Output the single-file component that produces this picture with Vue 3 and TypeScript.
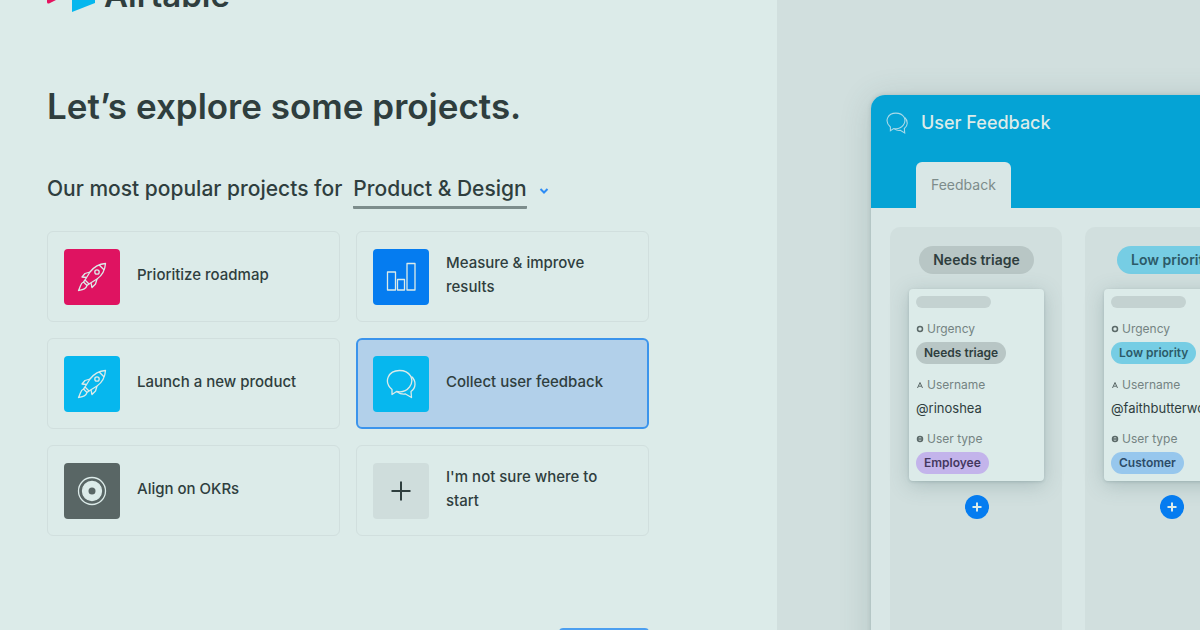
<script setup lang="ts">
import { ref } from 'vue'

type IconName = 'rocket' | 'chart' | 'chat' | 'target' | 'plus'

interface Project {
  label: string
  icon: IconName
  tone: string
}

interface Lane {
  status: string
  tone: string
  username: string
  userType: string
  typeTone: string
}

const category = ref('Product & Design')
const selected = ref('Collect user feedback')

const projects: Project[] = [
  { label: 'Prioritize roadmap', icon: 'rocket', tone: 'pink' },
  { label: 'Measure & improve results', icon: 'chart', tone: 'blue' },
  { label: 'Launch a new product', icon: 'rocket', tone: 'cyan' },
  { label: 'Collect user feedback', icon: 'chat', tone: 'cyan' },
  { label: 'Align on OKRs', icon: 'target', tone: 'slate' },
  { label: "I'm not sure where to start", icon: 'plus', tone: 'pale' },
]

const lanes: Lane[] = [
  { status: 'Needs triage', tone: 'gray', username: '@rinoshea', userType: 'Employee', typeTone: 'purple' },
  { status: 'Low priority', tone: 'sky', username: '@faithbutterworth', userType: 'Customer', typeTone: 'azure' },
]
</script>

<template>
  <div class="page">
    <main class="picker">
      <header class="brand">
        <svg class="brand-mark" width="49" height="30" viewBox="0 0 49 30" aria-hidden="true">
          <path d="M0 6 L17 14 L2 21.500 Q0 22 0 20Z" fill="#e5135f" />
          <path d="M25 13 L48 4 V21 L25 30Z" fill="#06b7ee" />
        </svg>
        <span class="brand-name">Airtable</span>
      </header>

      <h1>Let’s explore some projects.</h1>

      <div class="category">
        <label for="category">Our most popular projects for</label>
        <select id="category" v-model="category">
          <option>Product &amp; Design</option>
        </select>
        <svg class="chevron" width="10" height="8" viewBox="0 0 10 8" aria-hidden="true">
          <path d="M1.500 2 L5 5.500 L8.500 2" />
        </svg>
      </div>

      <div class="projects">
        <button
          v-for="project in projects"
          :key="project.label"
          type="button"
          class="project"
          :class="{ active: project.label === selected }"
          :aria-pressed="project.label === selected"
          @click="selected = project.label"
        >
          <span class="tile" :class="project.tone">
            <svg v-if="project.icon === 'rocket'" width="30" height="30" viewBox="-1 -1 30 30" aria-hidden="true">
              <path d="M27.500 .5 C20 1 15.500 4.500 12 9 L7 17 L11 21 L19 16 C24 12.500 27 8 27.500 .5Z" />
              <path d="M12 9 L7 10.500 L4 14 L8.500 14.500 M19 16 L17.500 21 L14 24.500 L13 19.800" />
              <path d="M21 1.800 L26.200 7" />
              <circle cx="19" cy="9" r="2.200" />
              <path d="M7 17 L5.500 19 M11 21 L9 22.500 M5.500 19 C2.500 20 3 22.500 .5 27.500 C5 26.500 8 26 9 22.500Z" />
            </svg>
            <svg v-else-if="project.icon === 'chart'" width="30" height="30" viewBox="-1 -1 30 30" aria-hidden="true">
              <rect x="0.500" y="9" width="8" height="18" />
              <rect x="10.500" y="16.500" width="7" height="10.500" />
              <rect x="20" y="0.500" width="8" height="26.500" />
            </svg>
            <svg v-else-if="project.icon === 'chat'" width="30" height="30" viewBox="-1 -1 30 30" aria-hidden="true">
              <path d="M5 24.500 V19.500 C-4 11.500 1.500 .5 12.500 .5 C23 .5 28 9.500 22.500 17 C19 21.500 14 22.500 9.500 21.500Z" />
              <path d="M24.500 6.500 C29.500 11 29 18 24 21.500 L24.500 27.500 L18.500 24 C15.500 24.500 13 24 10.500 22" />
            </svg>
            <svg v-else-if="project.icon === 'target'" width="30" height="30" viewBox="-1 -1 30 30" aria-hidden="true">
              <circle cx="14" cy="14" r="13.500" />
              <circle class="disc" cx="14" cy="14" r="9.500" />
              <circle class="dot" cx="14" cy="14" r="3.500" />
            </svg>
            <svg v-else width="30" height="30" viewBox="-1 -1 30 30" aria-hidden="true">
              <path class="cross" d="M14 4.500 V23.500 M4.500 14 H23.500" />
            </svg>
          </span>
          <span class="project-label">{{ project.label }}</span>
        </button>
      </div>

      <button type="button" class="next" aria-label="Next"></button>
    </main>

    <aside class="preview">
      <section class="base">
        <div class="base-head">
          <div class="base-title">
            <svg width="22" height="22" viewBox="-1 -1 30 30" aria-hidden="true">
              <path d="M5 24.500 V19.500 C-4 11.500 1.500 .5 12.500 .5 C23 .5 28 9.500 22.500 17 C19 21.500 14 22.500 9.500 21.500Z" />
              <path d="M24.500 6.500 C29.500 11 29 18 24 21.500 L24.500 27.500 L18.500 24 C15.500 24.500 13 24 10.500 22" />
            </svg>
            <h2>User Feedback</h2>
          </div>
          <div class="tab">Feedback</div>
        </div>

        <div class="lanes">
          <div v-for="lane in lanes" :key="lane.status" class="lane">
            <span class="status" :class="lane.tone">{{ lane.status }}</span>
            <article class="record">
              <div class="bar"></div>
              <div class="field">
                <svg width="8" height="8" viewBox="0 0 8 8" aria-hidden="true"><circle cx="4" cy="4" r="2.500" /></svg>
                Urgency
              </div>
              <span class="chip" :class="lane.tone">{{ lane.status }}</span>
              <div class="field">
                <svg width="8" height="8" viewBox="0 0 8 8" aria-hidden="true"><path class="thin" d="M1.500 7 L4 1.500 L6.500 7 M2.500 5.200 H5.500" /></svg>
                Username
              </div>
              <div class="value">{{ lane.username }}</div>
              <div class="field">
                <svg width="8" height="8" viewBox="0 0 8 8" aria-hidden="true"><circle cx="4" cy="4" r="2.500" /><path d="M2 4 H6" /></svg>
                User type
              </div>
              <span class="chip" :class="lane.typeTone">{{ lane.userType }}</span>
            </article>
            <button type="button" class="add" aria-label="Add record">
              <svg width="12" height="12" viewBox="0 0 12 12" aria-hidden="true"><path d="M6 1.500 V10.500 M1.500 6 H10.500" /></svg>
            </button>
          </div>
        </div>
      </section>
    </aside>
  </div>
</template>

<style>
body {
  margin: 0;
}
</style>

<style scoped>
* {
  box-sizing: border-box;
}

.page {
  display: grid;
  grid-template-columns: minmax(0, 1fr) 423px;
  height: 100vh;
  overflow: hidden;
  background: #dcebe9;
  color: #2f3e3e;
  font-family: Inter, "Liberation Sans", sans-serif;
}

button,
select {
  font: inherit;
  color: inherit;
}

.picker {
  display: flex;
  flex-direction: column;
  padding: 0 128px 0 47px;
  min-width: 0;
}

.brand {
  display: flex;
  align-items: flex-end;
  gap: 8px;
  height: 12px;
  flex-shrink: 0;
  overflow: hidden;
}

.brand-mark {
  flex-shrink: 0;
}

.brand-name {
  font-size: 33px;
  line-height: 34px;
  font-weight: 600;
}

h1 {
  margin: 72px 0 0;
  font-size: 35px;
  line-height: 44px;
  font-weight: 600;
}

.category {
  display: flex;
  align-items: flex-start;
  margin-top: 44px;
  height: 37px;
  font-size: 21px;
  line-height: 34px;
  font-weight: 500;
  white-space: nowrap;
}

.category select {
  appearance: none;
  field-sizing: content;
  margin-left: 11px;
  padding: 0;
  height: 37px;
  border: 0;
  border-bottom: 3px solid #7d8d8c;
  border-radius: 1px;
  background: transparent;
}

.chevron {
  align-self: center;
  margin-left: 12px;
  fill: none;
  stroke: #2d8cf5;
  stroke-width: 2;
}

.projects {
  display: grid;
  grid-template-columns: repeat(2, minmax(0, 1fr));
  gap: 16px;
  margin-top: 22px;
}

.project {
  display: flex;
  align-items: center;
  gap: 17px;
  min-height: 91px;
  padding: 16px;
  border: 1px solid #d1dfde;
  border-radius: 6px;
  background: transparent;
  text-align: left;
}

.project.active {
  border: 2px solid #3b94ec;
  padding: 15px;
  background: #b2d0ea;
}

.project-label {
  padding: 0 24px 4px 0;
  font-size: 15px;
  line-height: 24px;
  font-weight: 500;
}

.tile {
  display: grid;
  place-items: center;
  flex: none;
  width: 56px;
  height: 56px;
  border-radius: 4px;
}

.tile svg {
  fill: none;
  stroke: #dcebe9;
  stroke-width: 1.3;
  stroke-linejoin: round;
}

.tile .disc {
  fill: #dcebe9;
}

.tile .dot {
  fill: #596665;
  stroke: none;
}

.tile .cross {
  stroke: #2f3e3e;
  stroke-width: 2;
}

.pink {
  background: #df1361;
}

.blue {
  background: #057cf0;
}

.cyan {
  background: #06b7ee;
}

.slate {
  background: #596665;
}

.pale {
  background: #cfdddc;
}

.next {
  flex: none;
  align-self: flex-end;
  width: 90px;
  height: 40px;
  margin-top: 92px;
  border: 0;
  border-radius: 4px;
  background: #4c9ff0;
}

.preview {
  padding: 95px 0 0 94px;
  overflow: hidden;
  background: #d1dfde;
}

.base {
  width: 700px;
  height: 700px;
  border-radius: 14px;
  overflow: hidden;
  background: #d9e7e6;
  box-shadow: 0 4px 32px rgba(60, 90, 90, 0.2), 0 0 4px rgba(60, 90, 90, 0.2);
}

.base-head {
  display: flex;
  flex-direction: column;
  justify-content: space-between;
  height: 113px;
  padding: 14px 15px 0;
  background: #05a3d5;
}

.base-title {
  display: flex;
  align-items: center;
  gap: 13px;
  color: #dcebe9;
}

.base-title svg {
  fill: none;
  stroke: #a9d9e8;
  stroke-width: 1.5;
}

h2 {
  margin: 0;
  font-size: 18px;
  line-height: 28px;
  font-weight: 500;
}

.tab {
  align-self: flex-start;
  margin-left: 30px;
  padding: 0 15px;
  border-radius: 6px 6px 0 0;
  background: #d9e7e6;
  color: #7d8c8b;
  font-size: 14px;
  line-height: 46px;
}

.lanes {
  display: flex;
  gap: 23px;
  padding: 19px;
  height: 587px;
}

.lane {
  display: flex;
  flex-direction: column;
  align-items: center;
  flex: none;
  width: 172px;
  padding: 19px 18px 19px 19px;
  border-radius: 10px;
  background: #d1dfde;
}

.status {
  padding: 0 14px;
  border-radius: 14px;
  font-size: 14px;
  line-height: 28px;
  font-weight: 600;
  white-space: nowrap;
}

.gray {
  background: #b8c6c5;
}

.sky {
  background: #76cde4;
  color: #2c5a68;
}

.purple {
  background: #c3b4eb;
  color: #44385f;
}

.azure {
  background: #97c7ed;
  color: #2c4c68;
}

.record {
  display: flex;
  flex-direction: column;
  align-items: flex-start;
  align-self: stretch;
  margin-top: 15px;
  padding: 7px;
  border-radius: 4px;
  background: #dcebe9;
  box-shadow: 0 4px 20px rgba(60, 95, 100, 0.26), 0 1px 3px rgba(60, 95, 100, 0.2);
}

.bar {
  width: 75px;
  height: 12px;
  margin-bottom: 4px;
  border-radius: 6px;
  background: #c4d2d1;
}

.field {
  display: flex;
  align-items: center;
  gap: 3px;
  margin-top: 9px;
  color: #748382;
  font-size: 12px;
  line-height: 16px;
}

.field svg {
  fill: none;
  stroke: #5b6968;
  stroke-width: 1.5;
}

.field .thin {
  stroke-width: 1;
}

.chip {
  margin-top: 5px;
  padding: 0 8px;
  border-radius: 11px;
  font-size: 12px;
  line-height: 22px;
  font-weight: 600;
  white-space: nowrap;
}

.chip + .field,
.value + .field {
  margin-top: 13px;
}

.value {
  margin-top: 5px;
  font-size: 13px;
  line-height: 20px;
  white-space: nowrap;
}

.add {
  display: grid;
  place-items: center;
  width: 24px;
  height: 24px;
  margin-top: 14px;
  padding: 0;
  border: 0;
  border-radius: 50%;
  background: #057cf0;
}

.add svg {
  stroke: #dcebe9;
  stroke-width: 2;
}
</style>
